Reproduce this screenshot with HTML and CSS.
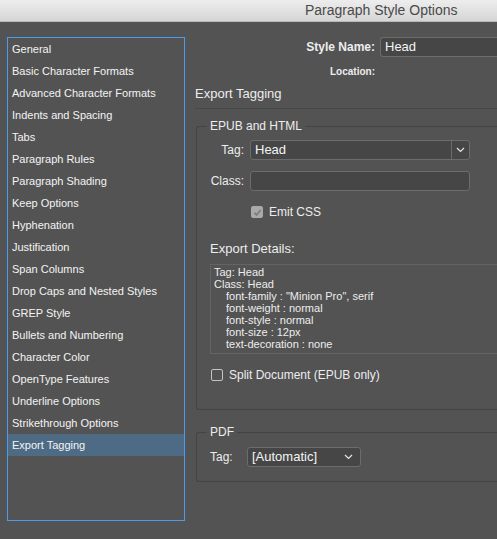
FILE: index.html
```html
<!DOCTYPE html>
<html lang="en">
<head>
    <meta charset="UTF-8">
    <title>Paragraph Style Options</title>
    <link rel="stylesheet" href="styles.css">
</head>
<body>
<div class="titlebar">Paragraph Style Options</div>
<div class="dialog">
    <ul class="nav">
        <li>General</li>
        <li>Basic Character Formats</li>
        <li>Advanced Character Formats</li>
        <li>Indents and Spacing</li>
        <li>Tabs</li>
        <li>Paragraph Rules</li>
        <li>Paragraph Shading</li>
        <li>Keep Options</li>
        <li>Hyphenation</li>
        <li>Justification</li>
        <li>Span Columns</li>
        <li>Drop Caps and Nested Styles</li>
        <li>GREP Style</li>
        <li>Bullets and Numbering</li>
        <li>Character Color</li>
        <li>OpenType Features</li>
        <li>Underline Options</li>
        <li>Strikethrough Options</li>
        <li class="active">Export Tagging</li>
    </ul>
    <div class="panel">
        <div class="name-row">
            <span class="name-label">Style Name:</span>
            <div class="field name-field">Head</div>
        </div>
        <div class="loc-row">Location:</div>
        <h2>Export Tagging</h2>

        <fieldset class="group epub">
            <legend>EPUB and HTML</legend>
            <div class="row">
                <span class="label">Tag:</span>
                <div class="field select tag-select">
                    <span class="value">Head</span>
                    <span class="arrow">
                        <svg width="9" height="6" viewBox="0 0 9 6"><polyline points="1,1 4.5,4.5 8,1" fill="none" stroke="#e6e6e6" stroke-width="1.2"/></svg>
                    </span>
                </div>
            </div>
            <div class="row class-row">
                <span class="label">Class:</span>
                <div class="field"></div>
            </div>
            <div class="check-row emit">
                <span class="checkbox checked">
                    <svg width="9" height="9" viewBox="0 0 9 9"><polyline points="1.5,4.8 3.6,7 7.5,2" fill="none" stroke="#7a7a7a" stroke-width="1.6"/></svg>
                </span>
                <span>Emit CSS</span>
            </div>
            <div class="details-label">Export Details:</div>
            <div class="details">
                <div>Tag: Head</div>
                <div>Class: Head</div>
                <div class="prop">font-family : "Minion Pro", serif</div>
                <div class="prop">font-weight : normal</div>
                <div class="prop">font-style : normal</div>
                <div class="prop">font-size : 12px</div>
                <div class="prop">text-decoration : none</div>
            </div>
            <div class="check-row split">
                <span class="checkbox"></span>
                <span>Split Document (EPUB only)</span>
            </div>
        </fieldset>

        <fieldset class="group pdf">
            <legend>PDF</legend>
            <div class="row pdf-row">
                <span class="label">Tag:</span>
                <div class="field select pdf-select">
                    <span class="value">[Automatic]</span>
                    <svg width="9" height="6" viewBox="0 0 9 6"><polyline points="1,1 4.5,4.5 8,1" fill="none" stroke="#e6e6e6" stroke-width="1.2"/></svg>
                </div>
            </div>
        </fieldset>
    </div>
</div>
</body>
</html>
```

FILE: styles.css
```css
html, body {
    margin: 0;
    height: 100%;
}
body {
    background: #535353;
    color: #ededed;
    font-family: "Liberation Sans", Arial, sans-serif;
    font-size: 12px;
    overflow: hidden;
}
.titlebar {
    box-sizing: border-box;
    height: 22px;
    padding-left: 305px;
    line-height: 21px;
    font-size: 14px;
    color: #4a4a4a;
    white-space: nowrap;
    background: linear-gradient(#ededed, #d6d6d6);
    border-bottom: 1px solid #b9b9b9;
}
.dialog {
    display: flex;
    align-items: flex-start;
}

/* left list */
.nav {
    flex: none;
    box-sizing: border-box;
    list-style: none;
    width: 178px;
    height: 484px;
    margin: 15px 0 0 7px;
    padding: 0;
    border: 1px solid #4a9cec;
    font-size: 11px;
}
.nav li {
    height: 22px;
    line-height: 22px;
    padding-left: 4px;
    color: #f4f4f4;
    white-space: nowrap;
}
.nav li.active {
    background: #4e6b86;
}

/* right panel - the dialog is cut off at the right edge */
.panel {
    flex: none;
    width: 302px;
    margin: 15px 0 0 10px;
}
.name-row {
    display: flex;
    height: 20px;
}
.name-label {
    width: 180px;
    padding-right: 5px;
    text-align: right;
    line-height: 20px;
    font-weight: bold;
}
.field {
    box-sizing: border-box;
    height: 20px;
    background: #464646;
    border: 1px solid #6c6c6c;
    border-radius: 3px;
    line-height: 18px;
    padding-left: 4px;
    color: #f4f4f4;
}
.name-field {
    flex: 1;
    font-size: 13px;
    border-right: none;
    border-radius: 3px 0 0 3px;
}
.loc-row {
    width: 180px;
    margin-top: 8px;
    line-height: 14px;
    text-align: right;
    font-size: 10px;
    font-weight: bold;
}
h2 {
    margin: 7px 0 0;
    padding-bottom: 6px;
    line-height: 16px;
    font-size: 13px;
    font-weight: normal;
    border-bottom: 1px solid #464646;
}

/* group boxes */
.group {
    margin: 10px 0 0 1px;
    padding: 0 0 27px;
    border: 1px solid #444;
    border-right: none;
    border-radius: 3px 0 0 3px;
    min-width: 0;
}
.group legend {
    margin-left: 10px;
    padding: 0 3px;
    line-height: 14px;
    font-size: 12px;
}
.row {
    display: flex;
    align-items: center;
    margin-top: 7px;
}
.row .label {
    width: 47px;
    padding-right: 6px;
    text-align: right;
    font-size: 12px;
}
.row .field {
    width: 220px;
}
.class-row {
    margin-top: 11px;
}
.select {
    display: flex;
    align-items: center;
    font-size: 13px;
}
.select .value {
    flex: 1;
}
.tag-select .arrow {
    display: flex;
    align-items: center;
    justify-content: center;
    width: 17px;
    height: 18px;
    border-left: 1px solid #6c6c6c;
}
.check-row {
    display: flex;
    align-items: center;
    height: 14px;
}
.checkbox {
    box-sizing: border-box;
    display: flex;
    align-items: center;
    justify-content: center;
    width: 12px;
    height: 12px;
    margin-right: 6px;
    border: 1px solid #c4c4c4;
    border-radius: 2px;
}
.checkbox.checked {
    background: #a9a9a9;
    border-color: #a9a9a9;
}
.emit {
    margin: 14px 0 0 54px;
}
.details-label {
    margin: 22px 0 0 13px;
    line-height: 16px;
    font-size: 13px;
}
.details {
    margin: 7px 0 0 13px;
    height: 90px;
    box-sizing: border-box;
    padding: 1px 0 0 3px;
    border: 1px solid #646464;
    border-right: none;
    font-size: 11px;
    line-height: 12px;
}
.details .prop {
    padding-left: 12px;
}
.split {
    margin: 14px 0 0 14px;
}
.pdf {
    margin-top: 15px;
    padding-bottom: 14px;
}
.pdf-row {
    margin-top: 8px;
}
.pdf-row .label {
    width: 37px;
    padding-right: 0;
    text-align: left;
    margin-left: 13px;
}
.pdf-row .field.pdf-select {
    width: 114px;
    padding-right: 7px;
}
```
